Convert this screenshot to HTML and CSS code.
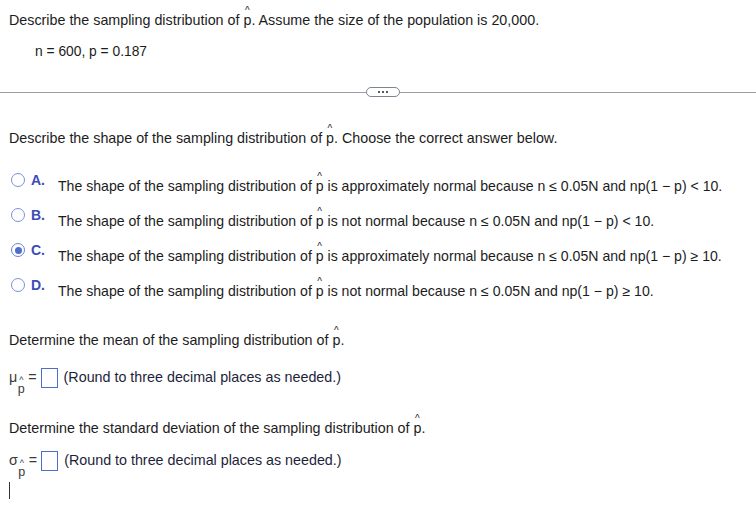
FILE: index.html
```html
<!DOCTYPE html>
<html>
<head>
<meta charset="utf-8">
<link rel="stylesheet" href="styles.css">
</head>
<body>
<div class="page">
  <p class="q intro">Describe the sampling distribution of <span class="hat">p</span>. Assume the size of the population is 20,000.</p>
  <p class="given">n = 600, p = 0.187</p>

  <div class="divider">
    <div class="rule left"></div>
    <div class="pill"><span></span><span></span><span></span></div>
    <div class="rule"></div>
  </div>

  <p class="q shape">Describe the shape of the sampling distribution of <span class="hat">p</span>. Choose the correct answer below.</p>

  <div class="options">
    <div class="opt">
      <span class="radio"></span><span class="letter">A.</span>
      <span class="otext">The shape of the sampling distribution of <span class="hat">p</span> is approximately normal because n ≤ 0.05N and np(1 − p) &lt; 10.</span>
    </div>
    <div class="opt">
      <span class="radio"></span><span class="letter">B.</span>
      <span class="otext">The shape of the sampling distribution of <span class="hat">p</span> is not normal because n ≤ 0.05N and np(1 − p) &lt; 10.</span>
    </div>
    <div class="opt">
      <span class="radio checked"></span><span class="letter">C.</span>
      <span class="otext">The shape of the sampling distribution of <span class="hat">p</span> is approximately normal because n ≤ 0.05N and np(1 − p) ≥ 10.</span>
    </div>
    <div class="opt">
      <span class="radio"></span><span class="letter">D.</span>
      <span class="otext">The shape of the sampling distribution of <span class="hat">p</span> is not normal because n ≤ 0.05N and np(1 − p) ≥ 10.</span>
    </div>
  </div>

  <p class="q mean">Determine the mean of the sampling distribution of <span class="hat">p</span>.</p>
  <div class="answer first">
    <span class="sym">μ<span class="sub"><span class="caret">^</span><span class="subp">p</span></span></span>
    <span class="eq">=</span>
    <span class="box"></span>
    <span class="hint">(Round to three decimal places as needed.)</span>
  </div>

  <p class="q sd">Determine the standard deviation of the sampling distribution of <span class="hat">p</span>.</p>
  <div class="answer second">
    <span class="sym">σ<span class="sub"><span class="caret">^</span><span class="subp">p</span></span></span>
    <span class="eq">=</span>
    <span class="box"></span>
    <span class="hint">(Round to three decimal places as needed.)</span>
  </div>
  <div class="cursor"></div>
</div>
</body>
</html>
```

FILE: styles.css
```css
html, body {
  margin: 0;
  padding: 0;
  background: #ffffff;
}
body {
  font-family: "Liberation Sans", Arial, sans-serif;
  font-size: 14.3px;
  color: #1c1c1c;
}
.page {
  width: 756px;
  height: 515px;
  overflow: hidden;
}
p {
  margin: 0;
}
.q {
  padding-left: 9px;
  line-height: 16px;
  white-space: nowrap;
}
.intro {
  padding-top: 12px;
}
.given {
  padding-left: 35px;
  margin-top: 16px;
  line-height: 16px;
  font-size: 13.8px;
}
.hat {
  position: relative;
  display: inline-block;
}
.hat::before {
  content: "^";
  position: absolute;
  left: 1.5px;
  top: -6px;
  font-size: 10px;
  line-height: 10px;
}
.divider {
  display: flex;
  align-items: center;
  margin-top: 26px;
  height: 12px;
}
.rule {
  flex: 1;
  height: 1px;
  background: #9aa0a8;
}
.rule.left {
  flex: 0 0 366px;
}
.pill {
  box-sizing: border-box;
  width: 34px;
  height: 10px;
  border: 1px solid #7f8590;
  border-radius: 5px;
  display: flex;
  align-items: center;
  justify-content: center;
  gap: 2px;
  background: #fff;
}
.pill span {
  width: 2px;
  height: 2px;
  background: #555b66;
}
.shape {
  margin-top: 32px;
}
.options {
  margin-top: 29px;
  display: flex;
  flex-direction: column;
  gap: 19px;
}
.opt {
  display: flex;
  align-items: flex-start;
  height: 16px;
  white-space: nowrap;
}
.radio {
  box-sizing: border-box;
  flex: 0 0 14px;
  width: 14px;
  height: 14px;
  border: 1.5px solid #7d8fda;
  border-radius: 50%;
  margin-left: 11px;
  margin-top: -2px;
  display: flex;
  align-items: center;
  justify-content: center;
  background: #fff;
}
.radio.checked {
  border-color: #6a82d8;
}
.radio.checked::after {
  content: "";
  width: 7px;
  height: 7px;
  border-radius: 50%;
  background: #4f6ccf;
}
.letter {
  font-weight: bold;
  font-size: 14px;
  color: #3a4cb6;
  margin-left: 6px;
  flex: 0 0 27px;
  line-height: 14px;
  margin-top: -2px;
}
.otext {
  font-size: 14.1px;
  line-height: 16px;
  margin-top: 3px;
}
.mean {
  margin-top: 36px;
}
.answer {
  display: flex;
  align-items: flex-start;
  padding-left: 9px;
  height: 28px;
}
.answer.first {
  margin-top: 21px;
}
.sym {
  display: flex;
  align-items: flex-start;
  line-height: 16px;
  color: #3a3a3a;
}
.sub {
  display: flex;
  flex-direction: column;
  align-items: center;
  width: 8px;
}
.caret {
  font-size: 9px;
  line-height: 6px;
  height: 6px;
  margin-top: 8px;
  overflow: visible;
}
.subp {
  font-size: 12.5px;
  line-height: 11px;
  margin-top: 1px;
}
.eq {
  line-height: 16px;
  margin-left: 3px;
  color: #3a3a3a;
}
.box {
  box-sizing: border-box;
  width: 17px;
  height: 20px;
  border: 1px solid #4a6fd0;
  margin-left: 4px;
  margin-top: -1px;
}
.hint {
  line-height: 16px;
  margin-left: 6px;
  color: #1e1e3a;
}
.sd {
  margin-top: 23px;
}
.answer.second {
  margin-top: 16px;
}
.cursor {
  width: 1px;
  height: 17px;
  background: #333;
  margin-left: 9px;
  margin-top: 2px;
}
```
